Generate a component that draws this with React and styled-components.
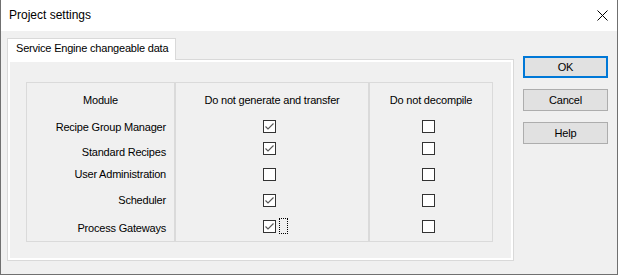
import React from 'react';
import styled, {createGlobalStyle} from 'styled-components';

const GlobalStyle = createGlobalStyle`
  html, body {
    margin: 0;
    padding: 0;
    background: #ffffff;
  }
  body {
    font-family: "Liberation Sans", Arial, sans-serif;
    font-size: 11px;
    letter-spacing: -0.2px;
    color: #000;
  }
`;

const modules = [
    {name: "Recipe Group Manager", gen: true, dec: false, h: 19},
    {name: "Standard Recipes", gen: true, dec: false, h: 31},
    {name: "User Administration", gen: false, dec: false, h: 14},
    {name: "Scheduler", gen: true, dec: false, h: 38},
    {name: "Process Gateways", gen: true, dec: false, h: 17, focus: true},
];

// heights of the checkbox rows (they do not line up exactly with the labels)
const checkRows = [19, 25, 27, 24, 28];

function CheckBox({checked}) {
    return (
        <Box>
            {checked && (
                <svg width="11" height="11" viewBox="0 0 11 11">
                    <path d="M1.5 5.5 L4 8 L9.5 2.5" fill="none" stroke="#555" strokeWidth="1.1"/>
                </svg>
            )}
        </Box>
    );
}

function App() {
    return (
        <>
            <GlobalStyle/>
            <Window>
                <TitleBar>
                    <Title>Project settings</Title>
                    <CloseButton>
                        <svg width="11" height="11" viewBox="0 0 11 11">
                            <path d="M0.5 0.5 L10.5 10.5 M10.5 0.5 L0.5 10.5" stroke="#000" strokeWidth="1"/>
                        </svg>
                    </CloseButton>
                </TitleBar>
                <Client>
                    <TabArea>
                        <TabStrip>
                            <Tab>Service Engine changeable data</Tab>
                        </TabStrip>
                        <Panel>
                            <Page>
                                <Table>
                                    <Column $width={149}>
                                        <HeaderCell>Module</HeaderCell>
                                        {modules.map((m) => (
                                            <NameCell key={m.name} $h={m.h}>{m.name}</NameCell>
                                        ))}
                                    </Column>
                                    <Column $width={194}>
                                        <HeaderCell>Do not generate and transfer</HeaderCell>
                                        {modules.map((m, i) => (
                                            <CheckCell key={m.name} $h={checkRows[i]} $left={87}>
                                                <CheckBox checked={m.gen}/>
                                                {m.focus && <FocusRect/>}
                                            </CheckCell>
                                        ))}
                                    </Column>
                                    <Column $width={124}>
                                        <HeaderCell>Do not decompile</HeaderCell>
                                        {modules.map((m, i) => (
                                            <CheckCell key={m.name} $h={checkRows[i]} $left={52}>
                                                <CheckBox checked={m.dec}/>
                                            </CheckCell>
                                        ))}
                                    </Column>
                                </Table>
                            </Page>
                        </Panel>
                    </TabArea>
                    <Buttons>
                        <Button $default>OK</Button>
                        <Button>Cancel</Button>
                        <Button>Help</Button>
                    </Buttons>
                </Client>
            </Window>
        </>
    );
}

export default App;

const Window = styled.div`
  width: 618px;
  height: 275px;
  box-sizing: border-box;
  border: 1px solid #707070;
  border-top: none;
  display: flex;
  flex-direction: column;
  background: #f0f0f0;
`;

const TitleBar = styled.div`
  height: 31px;
  flex-shrink: 0;
  background: #ffffff;
  display: flex;
  align-items: center;
  justify-content: space-between;
  padding: 0 9px 0 8px;
`;

const Title = styled.div`
  font-size: 12px;
  letter-spacing: 0;
  color: #000;
  margin-top: -1px;
`;

const CloseButton = styled.div`
  width: 11px;
  height: 11px;
  display: flex;
  margin-top: -1px;
`;

const Client = styled.div`
  flex: 1;
  display: flex;
  padding: 7px 0 0 6px;
  background: #f0f0f0;
`;

const TabArea = styled.div`
  width: 507px;
  display: flex;
  flex-direction: column;
`;

const TabStrip = styled.div`
  display: flex;
  height: 21px;
  position: relative;
  z-index: 1;
`;

const Tab = styled.div`
  box-sizing: border-box;
  width: 169px;
  height: 22px;
  background: #ffffff;
  border: 1px solid #d9d9d9;
  border-bottom: none;
  padding: 3px 0 0 8px;
  font-size: 11px;
  white-space: nowrap;
`;

const Panel = styled.div`
  box-sizing: border-box;
  height: 202px;
  border: 1px solid #d9d9d9;
  background: #ffffff;
  padding: 2px;
  display: flex;
`;

const Page = styled.div`
  flex: 1;
  background: #f0f0f0;
  padding: 20px 0 0 16px;
`;

const Table = styled.div`
  display: flex;
  height: 160px;
`;

const Column = styled.div`
  box-sizing: border-box;
  width: ${p => p.$width}px;
  border: 1px solid #dadada;
  display: flex;
  flex-direction: column;
`;

const HeaderCell = styled.div`
  height: 34px;
  display: flex;
  align-items: center;
  justify-content: center;
  flex-shrink: 0;
`;

const NameCell = styled.div`
  height: ${p => p.$h}px;
  display: flex;
  align-items: center;
  justify-content: flex-end;
  padding-right: 8px;
  white-space: nowrap;
  flex-shrink: 0;
`;

const CheckCell = styled.div`
  height: ${p => p.$h}px;
  display: flex;
  align-items: center;
  padding-left: ${p => p.$left}px;
  flex-shrink: 0;
`;

const Box = styled.div`
  box-sizing: border-box;
  width: 13px;
  height: 13px;
  border: 1px solid #333333;
  background: #ffffff;
  display: flex;
  align-items: center;
  justify-content: center;
`;

const FocusRect = styled.div`
  box-sizing: border-box;
  width: 9px;
  height: 16px;
  margin-left: 3px;
  border: 1px dotted #000;
`;

const Buttons = styled.div`
  display: flex;
  flex-direction: column;
  gap: 11px;
  margin-left: 9px;
  padding-top: 18px;
`;

const Button = styled.div`
  box-sizing: border-box;
  width: 85px;
  height: 22px;
  background: #e1e1e1;
  border: ${p => p.$default ? "2px solid #0078d7" : "1px solid #adadad"};
  display: flex;
  align-items: center;
  justify-content: center;
  font-size: 11px;
`;
